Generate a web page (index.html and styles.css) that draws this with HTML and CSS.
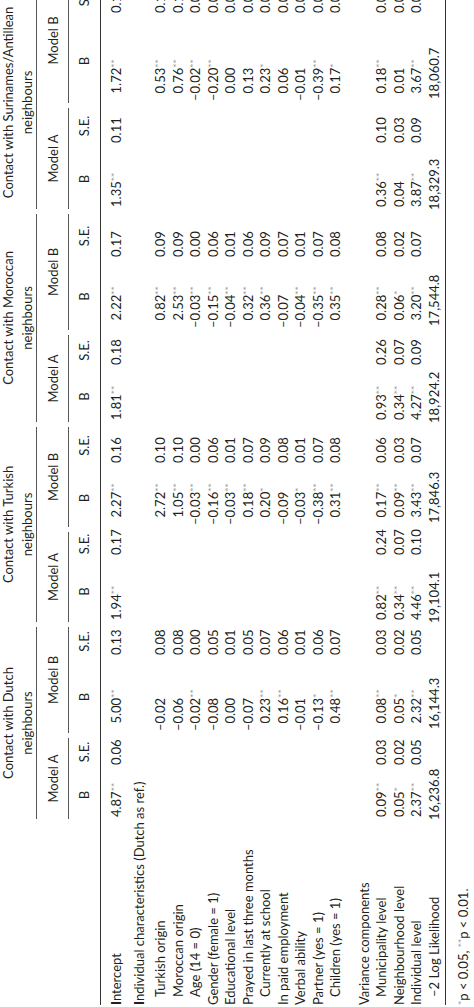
FILE: index.html
```html
<!DOCTYPE html>
<html lang="en">
<head>
<meta charset="utf-8">
<title>Table</title>
<link rel="stylesheet" href="styles.css">
</head>
<body>
<div class="page">
  <div class="rot">
    <table class="t">
      <colgroup>
        <col class="c-l">
        <col class="d-ab"><col class="d-as"><col class="d-bb"><col class="d-bs">
        <col class="t-ab"><col class="t-as"><col class="t-bb"><col class="t-bs">
        <col class="m-ab"><col class="m-as"><col class="m-bb"><col class="m-bs">
        <col class="s-ab"><col class="s-as"><col class="s-bb"><col class="s-bs">
      </colgroup>
      <thead>
        <tr class="r-group">
          <th></th>
          <th colspan="4"><div class="gh">Contact with Dutch<br>neighbours</div></th>
          <th colspan="4"><div class="gh">Contact with Turkish<br>neighbours</div></th>
          <th colspan="4"><div class="gh">Contact with Moroccan<br>neighbours</div></th>
          <th colspan="4"><div class="gh gh-s">Contact with Surinames/Antillean<br>neighbours</div></th>
        </tr>
        <tr class="r-model">
          <th></th>
          <th colspan="2"><div class="mh">Model A</div></th><th colspan="2"><div class="mh">Model B</div></th>
          <th colspan="2"><div class="mh">Model A</div></th><th colspan="2"><div class="mh">Model B</div></th>
          <th colspan="2"><div class="mh">Model A</div></th><th colspan="2"><div class="mh">Model B</div></th>
          <th colspan="2"><div class="mh">Model A</div></th><th colspan="2"><div class="mh">Model B</div></th>
        </tr>
        <tr class="r-bse">
          <th></th>
          <th>B</th><th>S.E.</th><th>B</th><th>S.E.</th>
          <th>B</th><th>S.E.</th><th>B</th><th>S.E.</th>
          <th>B</th><th>S.E.</th><th>B</th><th>S.E.</th>
          <th>B</th><th>S.E.</th><th>B</th><th>S.E.</th>
        </tr>
      </thead>
      <tbody>
        <tr class="r-first">
          <td class="lab"><span class="k">I</span>ntercept</td>
          <td class="v"><span class="i">4</span>.87<span class="s">**</span></td><td class="v"><span class="i">0</span>.06</td><td class="v"><span class="w">5</span>.00<span class="s">**</span></td><td class="v"><span class="i">0</span>.13</td>
          <td class="v"><span class="i">1</span>.94<span class="s">**</span></td><td class="v"><span class="i">0</span>.17</td><td class="v"><span class="w">2</span>.27<span class="s">**</span></td><td class="v"><span class="i">0</span>.16</td>
          <td class="v"><span class="i">1</span>.81<span class="s">**</span></td><td class="v"><span class="i">0</span>.18</td><td class="v"><span class="w">2</span>.22<span class="s">**</span></td><td class="v"><span class="i">0</span>.17</td>
          <td class="v"><span class="i">1</span>.35<span class="s">**</span></td><td class="v"><span class="i">0</span>.11</td><td class="v"><span class="w">1</span>.72<span class="s">**</span></td><td class="v"><span class="i">0</span>.16</td>
        </tr>
        <tr class="r-sec">
          <td class="lab"><span class="k">I</span>ndividual characteristics (Dutch as ref.)</td>
          <td></td><td></td><td></td><td></td><td></td><td></td><td></td><td></td>
          <td></td><td></td><td></td><td></td><td></td><td></td><td></td><td></td>
        </tr>
        <tr>
          <td class="lab ind">Turkish origin</td>
          <td></td><td></td><td class="v"><span class="w">–0</span>.02</td><td class="v"><span class="i">0</span>.08</td>
          <td></td><td></td><td class="v"><span class="w">2</span>.72<span class="s">**</span></td><td class="v"><span class="i">0</span>.10</td>
          <td></td><td></td><td class="v"><span class="w">0</span>.82<span class="s">**</span></td><td class="v"><span class="i">0</span>.09</td>
          <td></td><td></td><td class="v"><span class="w">0</span>.53<span class="s">**</span></td><td class="v"><span class="i">0</span>.10</td>
        </tr>
        <tr>
          <td class="lab ind">Moroccan origin</td>
          <td></td><td></td><td class="v"><span class="w">–0</span>.06</td><td class="v"><span class="i">0</span>.08</td>
          <td></td><td></td><td class="v"><span class="w">1</span>.05<span class="s">**</span></td><td class="v"><span class="i">0</span>.10</td>
          <td></td><td></td><td class="v"><span class="w">2</span>.53<span class="s">**</span></td><td class="v"><span class="i">0</span>.09</td>
          <td></td><td></td><td class="v"><span class="w">0</span>.76<span class="s">**</span></td><td class="v"><span class="i">0</span>.10</td>
        </tr>
        <tr>
          <td class="lab ind">Age (14 = 0)</td>
          <td></td><td></td><td class="v"><span class="w">–0</span>.02<span class="s">**</span></td><td class="v"><span class="i">0</span>.00</td>
          <td></td><td></td><td class="v"><span class="w">–0</span>.03<span class="s">**</span></td><td class="v"><span class="i">0</span>.00</td>
          <td></td><td></td><td class="v"><span class="w">–0</span>.03<span class="s">**</span></td><td class="v"><span class="i">0</span>.00</td>
          <td></td><td></td><td class="v"><span class="w">–0</span>.02<span class="s">**</span></td><td class="v"><span class="i">0</span>.01</td>
        </tr>
        <tr>
          <td class="lab">Gender (female = 1)</td>
          <td></td><td></td><td class="v"><span class="w">–0</span>.08</td><td class="v"><span class="i">0</span>.05</td>
          <td></td><td></td><td class="v"><span class="w">–0</span>.16<span class="s">**</span></td><td class="v"><span class="i">0</span>.06</td>
          <td></td><td></td><td class="v"><span class="w">–0</span>.15<span class="s">**</span></td><td class="v"><span class="i">0</span>.06</td>
          <td></td><td></td><td class="v"><span class="w">–0</span>.20<span class="s">**</span></td><td class="v"><span class="i">0</span>.06</td>
        </tr>
        <tr>
          <td class="lab">Educational level</td>
          <td></td><td></td><td class="v"><span class="w">0</span>.00</td><td class="v"><span class="i">0</span>.01</td>
          <td></td><td></td><td class="v"><span class="w">–0</span>.03<span class="s">**</span></td><td class="v"><span class="i">0</span>.01</td>
          <td></td><td></td><td class="v"><span class="w">–0</span>.04<span class="s">**</span></td><td class="v"><span class="i">0</span>.01</td>
          <td></td><td></td><td class="v"><span class="w">0</span>.00</td><td class="v"><span class="i">0</span>.01</td>
        </tr>
        <tr>
          <td class="lab">Prayed in last three months</td>
          <td></td><td></td><td class="v"><span class="w">–0</span>.07</td><td class="v"><span class="i">0</span>.05</td>
          <td></td><td></td><td class="v"><span class="w">0</span>.18<span class="s">**</span></td><td class="v"><span class="i">0</span>.07</td>
          <td></td><td></td><td class="v"><span class="w">0</span>.32<span class="s">**</span></td><td class="v"><span class="i">0</span>.06</td>
          <td></td><td></td><td class="v"><span class="w">0</span>.13</td><td class="v"><span class="i">0</span>.07</td>
        </tr>
        <tr>
          <td class="lab ind">Currently at school</td>
          <td></td><td></td><td class="v"><span class="w">0</span>.23<span class="s">**</span></td><td class="v"><span class="i">0</span>.07</td>
          <td></td><td></td><td class="v"><span class="w">0</span>.20<span class="s">*</span></td><td class="v"><span class="i">0</span>.09</td>
          <td></td><td></td><td class="v"><span class="w">0</span>.36<span class="s">**</span></td><td class="v"><span class="i">0</span>.09</td>
          <td></td><td></td><td class="v"><span class="w">0</span>.23<span class="s">*</span></td><td class="v"><span class="i">0</span>.09</td>
        </tr>
        <tr>
          <td class="lab">In paid employment</td>
          <td></td><td></td><td class="v"><span class="w">0</span>.16<span class="s">**</span></td><td class="v"><span class="i">0</span>.06</td>
          <td></td><td></td><td class="v"><span class="w">–0</span>.09</td><td class="v"><span class="i">0</span>.08</td>
          <td></td><td></td><td class="v"><span class="w">–0</span>.07</td><td class="v"><span class="i">0</span>.07</td>
          <td></td><td></td><td class="v"><span class="w">0</span>.06</td><td class="v"><span class="i">0</span>.08</td>
        </tr>
        <tr>
          <td class="lab">Verbal ability</td>
          <td></td><td></td><td class="v"><span class="w">–0</span>.01</td><td class="v"><span class="i">0</span>.01</td>
          <td></td><td></td><td class="v"><span class="w">–0</span>.03<span class="s">*</span></td><td class="v"><span class="i">0</span>.01</td>
          <td></td><td></td><td class="v"><span class="w">–0</span>.04<span class="s">**</span></td><td class="v"><span class="i">0</span>.01</td>
          <td></td><td></td><td class="v"><span class="w">–0</span>.01</td><td class="v"><span class="i">0</span>.01</td>
        </tr>
        <tr>
          <td class="lab">Partner (yes = 1)</td>
          <td></td><td></td><td class="v"><span class="w">–0</span>.13<span class="s">*</span></td><td class="v"><span class="i">0</span>.06</td>
          <td></td><td></td><td class="v"><span class="w">–0</span>.38<span class="s">**</span></td><td class="v"><span class="i">0</span>.07</td>
          <td></td><td></td><td class="v"><span class="w">–0</span>.35<span class="s">**</span></td><td class="v"><span class="i">0</span>.07</td>
          <td></td><td></td><td class="v"><span class="w">–0</span>.39<span class="s">**</span></td><td class="v"><span class="i">0</span>.08</td>
        </tr>
        <tr class="r-endsec">
          <td class="lab ind">Children (yes = 1)</td>
          <td></td><td></td><td class="v"><span class="w">0</span>.48<span class="s">**</span></td><td class="v"><span class="i">0</span>.07</td>
          <td></td><td></td><td class="v"><span class="w">0</span>.31<span class="s">**</span></td><td class="v"><span class="i">0</span>.08</td>
          <td></td><td></td><td class="v"><span class="w">0</span>.35<span class="s">**</span></td><td class="v"><span class="i">0</span>.08</td>
          <td></td><td></td><td class="v"><span class="w">0</span>.17<span class="s">*</span></td><td class="v"><span class="i">0</span>.08</td>
        </tr>
        <tr>
          <td class="lab">Variance components</td>
          <td></td><td></td><td></td><td></td><td></td><td></td><td></td><td></td>
          <td></td><td></td><td></td><td></td><td></td><td></td><td></td><td></td>
        </tr>
        <tr>
          <td class="lab ind">Municipality level</td>
          <td class="v"><span class="i">0</span>.09<span class="s">**</span></td><td class="v"><span class="i">0</span>.03</td><td class="v"><span class="w">0</span>.08<span class="s">**</span></td><td class="v"><span class="i">0</span>.03</td>
          <td class="v"><span class="i">0</span>.82<span class="s">**</span></td><td class="v"><span class="i">0</span>.24</td><td class="v"><span class="w">0</span>.17<span class="s">**</span></td><td class="v"><span class="i">0</span>.06</td>
          <td class="v"><span class="i">0</span>.93<span class="s">**</span></td><td class="v"><span class="i">0</span>.26</td><td class="v"><span class="w">0</span>.28<span class="s">**</span></td><td class="v"><span class="i">0</span>.08</td>
          <td class="v"><span class="i">0</span>.36<span class="s">**</span></td><td class="v"><span class="i">0</span>.10</td><td class="v"><span class="w">0</span>.18<span class="s">**</span></td><td class="v"><span class="i">0</span>.06</td>
        </tr>
        <tr>
          <td class="lab">Neighbourhood level</td>
          <td class="v"><span class="i">0</span>.05<span class="s">*</span></td><td class="v"><span class="i">0</span>.02</td><td class="v"><span class="w">0</span>.05<span class="s">*</span></td><td class="v"><span class="i">0</span>.02</td>
          <td class="v"><span class="i">0</span>.34<span class="s">**</span></td><td class="v"><span class="i">0</span>.07</td><td class="v"><span class="w">0</span>.09<span class="s">**</span></td><td class="v"><span class="i">0</span>.03</td>
          <td class="v"><span class="i">0</span>.34<span class="s">**</span></td><td class="v"><span class="i">0</span>.07</td><td class="v"><span class="w">0</span>.06<span class="s">*</span></td><td class="v"><span class="i">0</span>.02</td>
          <td class="v"><span class="i">0</span>.04</td><td class="v"><span class="i">0</span>.03</td><td class="v"><span class="w">0</span>.01</td><td class="v"><span class="i">0</span>.02</td>
        </tr>
        <tr>
          <td class="lab">Individual level</td>
          <td class="v"><span class="i">2</span>.37<span class="s">**</span></td><td class="v"><span class="i">0</span>.05</td><td class="v"><span class="w">2</span>.32<span class="s">**</span></td><td class="v"><span class="i">0</span>.05</td>
          <td class="v"><span class="i">4</span>.46<span class="s">**</span></td><td class="v"><span class="i">0</span>.10</td><td class="v"><span class="w">3</span>.43<span class="s">**</span></td><td class="v"><span class="i">0</span>.07</td>
          <td class="v"><span class="i">4</span>.27<span class="s">**</span></td><td class="v"><span class="i">0</span>.09</td><td class="v"><span class="w">3</span>.20<span class="s">**</span></td><td class="v"><span class="i">0</span>.07</td>
          <td class="v"><span class="i">3</span>.87<span class="s">**</span></td><td class="v"><span class="i">0</span>.09</td><td class="v"><span class="w">3</span>.67<span class="s">**</span></td><td class="v"><span class="i">0</span>.08</td>
        </tr>
        <tr class="r-last">
          <td class="lab ind">–2 Log Likelihood</td>
          <td class="ll" colspan="2">16,236.8</td><td class="ll llb" colspan="2">16,144.3</td>
          <td class="ll" colspan="2">19,104.1</td><td class="ll llb" colspan="2">17,846.3</td>
          <td class="ll" colspan="2">18,924.2</td><td class="ll llb" colspan="2">17,544.8</td>
          <td class="ll" colspan="2">18,329.3</td><td class="ll llb" colspan="2">18,060.7</td>
        </tr>
      </tbody>
    </table>
    <p class="note"><span class="s">*</span>p &lt; 0.05, <span class="s">**</span>p &lt; 0.01.</p>
  </div>
</div>
</body>
</html>
```

FILE: styles.css
```css
html, body {
  margin: 0;
  padding: 0;
  background: #fff;
}

body {
  font-family: Lato, "Liberation Sans", sans-serif;
  color: #231f20;
}

.page {
  width: 474px;
  height: 1007px;
  overflow: hidden;
}

.rot {
  width: 1040px;
  transform-origin: 0 0;
  transform: translateY(1007px) rotate(-90deg);
}

.t {
  margin-left: 2px;
  border-collapse: collapse;
  table-layout: fixed;
  width: 1022px;
  font-size: 13px;
}

.c-l { width: 184px; }
.d-ab { width: 52px; } .d-as { width: 34px; } .d-bb { width: 76px; } .d-bs { width: 35px; }
.t-ab { width: 65px; } .t-as { width: 30px; } .t-bb { width: 62px; } .t-bs { width: 43px; }
.m-ab { width: 55px; } .m-as { width: 37px; } .m-bb { width: 71px; } .m-bs { width: 50px; }
.s-ab { width: 64px; } .s-as { width: 42px; } .s-bb { width: 88px; } .s-bs { width: 42px; }

th, td {
  padding: 0;
  white-space: nowrap;
  font-weight: normal;
}

.r-group th {
  height: 37px;
  vertical-align: top;
}

.gh {
  margin: -1px 3px 0 2px;
  height: 37px;
  border-bottom: 1px solid #555;
  text-align: center;
  line-height: 19px;
}

.gh.gh-s {
  padding-right: 18px;
}

.r-model th {
  height: 32px;
  vertical-align: top;
}

.mh {
  margin: 0 3px 0 2px;
  height: 31px;
  line-height: 32px;
  border-bottom: 1px solid #555;
  text-align: center;
}

.r-bse th {
  height: 31px;
  text-align: center;
  line-height: 31px;
  border-bottom: 1.5px solid #333;
}

td {
  line-height: 17.5px;
  height: 17.5px;
}

.k {
  font-weight: 900;
}

.lab.ind {
  padding-left: 8px;
}

.v {
  padding-left: 4px;
}

.i {
  display: inline-block;
  width: 7.5px;
  text-align: right;
}

.w {
  display: inline-block;
  width: 15px;
  text-align: right;
}

.s {
  color: #8a8a8a;
  font-size: 10px;
  vertical-align: 3px;
  line-height: 0;
}

.r-first td {
  padding-top: 7px;
  padding-bottom: 5px;
}

.r-sec td {
  padding-bottom: 4px;
}

.r-endsec td {
  padding-bottom: 11px;
}

.r-last td {
  padding-bottom: 2px;
  border-bottom: 1.5px solid #333;
}

.ll {
  padding-left: 1px;
}

.llb {
  padding-left: 6px;
}

.note {
  margin: 9px 0 0 2px;
  font-size: 13px;
  line-height: 17px;
}
```
